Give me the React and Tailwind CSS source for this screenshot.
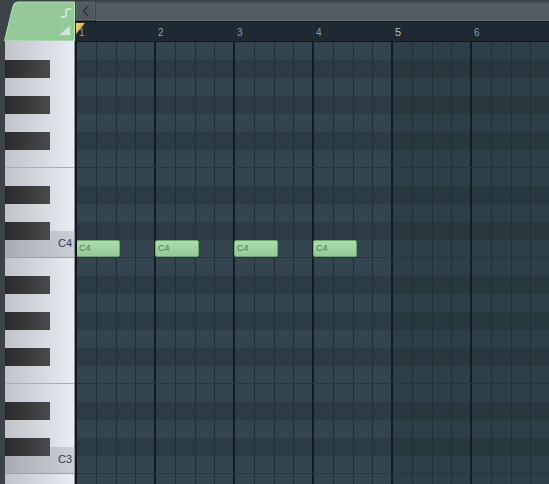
import { ChevronLeft } from "lucide-react";

// key pattern going down from B
const PATTERN = ["B", "A#", "A", "G#", "G", "F#", "F", "E", "D#", "D", "C#", "C"];
const ROWS = Array.from({ length: 25 }, (_, i) => {
  const name = PATTERN[i % 12];
  const octave = 4 - Math.floor(i / 12);
  return { name, octave, black: name.includes("#") };
});
const BARS = [1, 2, 3, 4, 5, 6];
const NOTES = [0, 1, 2, 3];

function GreenPanel() {
  return (
    <svg width="75" height="41" viewBox="0 0 75 41" className="block">
      <path d="M4.5 41 L13 6 Q14 2 18 2 L74.5 2 L74.5 41 Z" fill="#96c99a" stroke="#b9e3bb" strokeWidth="1" />
      <path d="M61 17 L63.5 17 Q66 17 66 14.5 L66 11.5 Q66 9 68.5 9 L71.5 9" fill="none" stroke="#eef8ee" strokeWidth="1.3" opacity="0.85" />
      <path d="M70 26 L70 35 L59 35 Z" fill="#e4f3e4" opacity="0.75" />
    </svg>
  );
}

function Ruler() {
  return (
    <div className="relative flex-1 bg-[#1e2931] border-t border-[#141b20]">
      <div className="flex h-full pl-[2px]">
        {BARS.map((b) => (
          <div key={b} className="w-[79px] shrink-0 flex items-end pb-[3px] pl-[2px]">
            <span
              className={`leading-none ${
                b === 5 ? "text-[11px] text-[#b4c3cd]" : "text-[10px] text-[#8a9fae]"
              }`}
            >
              {b}
            </span>
          </div>
        ))}
      </div>
      <svg width="12" height="14" viewBox="0 0 12 14" className="absolute left-0 top-[1px]">
        <defs>
          <linearGradient id="ph" x1="0" y1="0" x2="1" y2="1">
            <stop offset="0" stopColor="#f3d67a" />
            <stop offset="1" stopColor="#d9962c" />
          </linearGradient>
        </defs>
        <path d="M1 0 L10 0 L3 8.5 L1 11 Z" fill="url(#ph)" />
      </svg>
    </div>
  );
}

function Keyboard() {
  return (
    <div className="w-[75px] shrink-0 pl-[5px] bg-[#3b4349]">
      <div className="h-full pt-[1px] bg-linear-to-r from-[#bfc4cb] to-[#e8ecf3] border-r border-[#8f959c]">
        {ROWS.map((r, i) => {
          const line =
            r.name === "F" ? "border-b border-[#a9aeb5]" : r.name === "C" ? "border-b border-[#9ca1a8]" : "";
          const shade =
            r.name === "C#"
              ? "bg-[linear-gradient(to_bottom,transparent_50%,rgba(0,0,0,0.12)_50%)]"
              : r.name === "C"
              ? "bg-black/[0.12]"
              : "";
          return (
            <div key={i} className={`h-[18px] flex justify-between items-start ${line} ${shade}`}>
              {r.black && <div className="w-[45px] h-full bg-linear-to-r from-[#2a2a2b] to-[#4a4a4c]" />}
              {r.name === "C" && (
                <span className="ml-auto mt-[-2px] pr-[2px] text-[11px] leading-[11px] text-[#2e3d5e]">
                  C{r.octave}
                </span>
              )}
            </div>
          );
        })}
      </div>
    </div>
  );
}

function Grid() {
  return (
    <div className="relative flex-1 border-l-2 border-t border-[#0f181e] overflow-hidden">
      {ROWS.map((r, i) => {
        const line = r.name === "F" || r.name === "C" ? "border-b border-[#27343c]" : "";
        return (
          <div key={i} className={`h-[18px] flex ${line}`}>
            {BARS.map((b) =>
              [0, 1, 2, 3].map((beat) => {
                const late = b >= 5;
                const bg = r.black
                  ? late
                    ? "bg-[#29373f]"
                    : "bg-[#2c3b45]"
                  : late
                  ? "bg-[#2f3f49]"
                  : "bg-[#34454f]";
                const edge = beat === 3 ? "border-r-2 border-[#121c23]" : "border-r border-[#222e36]";
                return <div key={`${b}-${beat}`} className={`w-[19.75px] shrink-0 h-full ${bg} ${edge}`} />;
              })
            )}
          </div>
        );
      })}
      {/* notes on the C4 row */}
      <div className="absolute left-[-1px] top-[198px] flex">
        {NOTES.map((n) => (
          <div key={n} className="w-[79px] shrink-0">
            <div className="w-[44px] h-[17px] rounded-[2px] border border-[#6ea672] bg-linear-to-b from-[#acdeae] to-[#93ca97] flex items-center pl-[2px]">
              <span className="text-[9px] leading-none text-[#4f7a4b]">C4</span>
            </div>
          </div>
        ))}
      </div>
    </div>
  );
}

export default function App() {
  return (
    <div className="w-[549px] h-[484px] overflow-hidden bg-[#3c444a] flex flex-col font-['Liberation_Sans',sans-serif]">
      <div className="flex h-[41px] shrink-0">
        <div className="w-[75px] shrink-0">
          <GreenPanel />
        </div>
        <div className="flex-1 flex flex-col">
          <div className="h-[21px] shrink-0 flex items-start pt-[2px] pl-[1px] gap-[1px]">
            <div className="w-[19px] h-[18px] flex items-center justify-center bg-[#51585e] border border-[#5f666c]">
              <ChevronLeft size={18} strokeWidth={1.6} className="text-[#2a2f34]" />
            </div>
            <div className="flex-1 h-[19px] bg-[#535a60] border-t border-[#464d53] border-b border-b-[#6a7177]" />
          </div>
          <Ruler />
        </div>
      </div>
      <div className="flex flex-1 min-h-0">
        <Keyboard />
        <Grid />
      </div>
    </div>
  );
}
